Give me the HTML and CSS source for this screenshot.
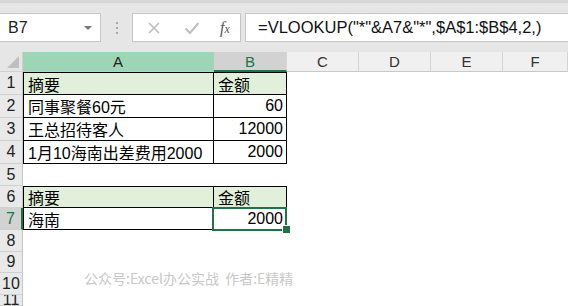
FILE: index.html
```html
<!DOCTYPE html>
<html lang="zh">
<head>
    <meta charset="UTF-8">
    <title>VLOOKUP 模糊查找</title>
    <link rel="stylesheet" href="styles.css">
</head>
<body>
    <div class="topline"></div>
    <div class="fbar">
        <div class="namebox">
            <span>B7</span>
            <span class="caret"></span>
        </div>
        <div class="dots"><i></i><i></i><i></i></div>
        <div class="btns">
            <svg class="ico" width="14" height="14" viewBox="0 0 14 14"><path d="M2 2L12 12M12 2L2 12" stroke="#bdbdbd" stroke-width="1.6" fill="none"/></svg>
            <svg class="ico" width="16" height="14" viewBox="0 0 16 14"><path d="M1.5 7.5L6 12L14.5 2" stroke="#bdbdbd" stroke-width="2" fill="none"/></svg>
            <span class="fx">f<small>x</small></span>
        </div>
        <div class="formula">=VLOOKUP("*"&amp;A7&amp;"*",$A$1:$B$4,2,)</div>
    </div>

    <div class="sheet">
        <!-- header -->
        <div class="corner"><span class="tri"></span></div>
        <div class="ch ch-a">A</div>
        <div class="ch ch-b">B</div>
        <div class="ch">C</div>
        <div class="ch">D</div>
        <div class="ch">E</div>
        <div class="ch">F</div>

        <!-- row 1 -->
        <div class="rh">1</div>
        <div class="c t a top hd">摘要</div>
        <div class="c t top hd">金额</div>
        <div class="c"></div><div class="c"></div><div class="c"></div><div class="c"></div>

        <!-- row 2 -->
        <div class="rh">2</div>
        <div class="c t a">同事聚餐60元</div>
        <div class="c t num">60</div>
        <div class="c"></div><div class="c"></div><div class="c"></div><div class="c"></div>

        <!-- row 3 -->
        <div class="rh">3</div>
        <div class="c t a">王总招待客人</div>
        <div class="c t num">12000</div>
        <div class="c"></div><div class="c"></div><div class="c"></div><div class="c"></div>

        <!-- row 4 -->
        <div class="rh">4</div>
        <div class="c t a">1月10海南出差费用2000</div>
        <div class="c t num">2000</div>
        <div class="c"></div><div class="c"></div><div class="c"></div><div class="c"></div>

        <!-- row 5 -->
        <div class="rh">5</div>
        <div class="c"></div><div class="c"></div>
        <div class="c"></div><div class="c"></div><div class="c"></div><div class="c"></div>

        <!-- row 6 -->
        <div class="rh">6</div>
        <div class="c t a top hd">摘要</div>
        <div class="c t top hd">金额</div>
        <div class="c"></div><div class="c"></div><div class="c"></div><div class="c"></div>

        <!-- row 7 -->
        <div class="rh rh-sel">7</div>
        <div class="c t a">海南</div>
        <div class="c t num sel">2000</div>
        <div class="c"></div><div class="c"></div><div class="c"></div><div class="c"></div>

        <!-- rows 8-11 -->
        <div class="rh">8</div>
        <div class="c"></div><div class="c"></div><div class="c"></div><div class="c"></div><div class="c"></div><div class="c"></div>
        <div class="rh">9</div>
        <div class="c"></div><div class="c"></div><div class="c"></div><div class="c"></div><div class="c"></div><div class="c"></div>
        <div class="rh">10</div>
        <div class="c"></div><div class="c"></div><div class="c"></div><div class="c"></div><div class="c"></div><div class="c"></div>
        <div class="rh">11</div>
        <div class="c"></div><div class="c"></div><div class="c"></div><div class="c"></div><div class="c"></div><div class="c"></div>

        <div class="mark">公众号:Excel办公实战&nbsp; 作者:E精精</div>
    </div>
</body>
</html>
```

FILE: styles.css
```css
* {
    margin: 0;
    padding: 0;
    box-sizing: border-box;
}
body {
    width: 568px;
    height: 306px;
    overflow: hidden;
    background: #fff;
    font-family: 'Liberation Sans', 'Noto Sans CJK SC', sans-serif;
    color: #000;
}
.topline {
    height: 3px;
    background: #d6d6d6;
}
.fbar {
    height: 49px;
    background: #e6e6e6;
    display: flex;
    align-items: flex-start;
    padding-top: 10px;
    white-space: nowrap;
}
.namebox {
    width: 101px;
    height: 29px;
    background: #fff;
    border: 1px solid #c6c6c6;
    border-left: none;
    display: flex;
    align-items: center;
    justify-content: space-between;
    padding: 0 8px 0 8px;
    font-size: 16px;
    color: #222;
}
.caret {
    width: 0;
    height: 0;
    border-left: 4px solid transparent;
    border-right: 4px solid transparent;
    border-top: 4px solid #777;
    margin-top: 1px;
}
.dots {
    width: 31px;
    height: 29px;
    display: flex;
    flex-direction: column;
    align-items: center;
    justify-content: center;
    gap: 3px;
}
.dots i {
    display: block;
    width: 2px;
    height: 2px;
    background: #aaa;
}
.btns {
    width: 109px;
    height: 29px;
    background: #fff;
    border: 1px solid #c6c6c6;
    display: flex;
    align-items: center;
    padding-left: 14px;
}
.btns .ico:nth-child(2) {
    margin-left: 23px;
}
.fx {
    margin-left: 20px;
    font-family: 'Liberation Serif', serif;
    font-style: italic;
    font-size: 16px;
    color: #555;
}
.fx small {
    font-size: 12px;
}
.formula {
    flex: 1;
    height: 29px;
    margin-left: 4px;
    background: #fff;
    border: 1px solid #c6c6c6;
    border-right: none;
    font-size: 16.5px;
    line-height: 27px;
    padding-left: 12px;
    color: #111;
}

.sheet {
    position: relative;
    display: grid;
    grid-template-columns: 23px 191px 73px 72px 72px 72px 1fr;
    grid-template-rows: 20px 23px 23px 23px 23px 22px 22px 22px 22px 21px 22px 11px;
    height: 254px;
}
.corner {
    background: #e6e6e6;
    border-right: 1px solid #d0d0d0;
    border-bottom: 1px solid #d0d0d0;
    position: relative;
}
.tri {
    position: absolute;
    right: 3px;
    bottom: 3px;
    width: 0;
    height: 0;
    border-left: 12px solid transparent;
    border-bottom: 12px solid #bfbfbf;
}
.ch {
    background: #f0f0f0;
    border-right: 1px solid #d4d4d4;
    border-bottom: 1px solid #c8c8c8;
    display: flex;
    align-items: center;
    justify-content: center;
    font-size: 15px;
    color: #333;
}
.ch-a {
    background: #9fd5b7;
    border-right-color: #9fd5b7;
    color: #222;
}
.ch-b {
    background: #d2d2d2;
    border-bottom: 2px solid #217346;
    color: #217346;
}
.rh {
    background: #e9e9e9;
    border-right: 1px solid #c6c6c6;
    border-bottom: 1px solid #d0d0d0;
    display: flex;
    align-items: center;
    justify-content: center;
    font-size: 16px;
    color: #222;
    overflow: hidden;
}
.rh-sel {
    background: #d2d2d2;
    border-right: 2px solid #217346;
    color: #217346;
}
.c {
    display: flex;
    align-items: center;
    padding-left: 4px;
    font-size: 16px;
    white-space: nowrap;
}
.t {
    border-right: 1px solid #000;
    border-bottom: 1px solid #000;
}
.t.a {
    border-left: 1px solid #000;
}
.t.top {
    border-top: 1px solid #000;
}
.hd {
    background: #e2efda;
}
.num {
    justify-content: flex-end;
    padding-right: 3px;
}
.sel {
    position: relative;
}
.sel::after {
    content: '';
    position: absolute;
    top: -1px;
    left: -2px;
    right: -1px;
    bottom: -2px;
    border: 2px solid #217346;
}
.sel::before {
    content: '';
    position: absolute;
    right: -5px;
    bottom: -5px;
    width: 7px;
    height: 7px;
    background: #217346;
    border: 1px solid #fff;
    z-index: 1;
}
.mark {
    position: absolute;
    left: 84px;
    top: 216px;
    font-family: 'Noto Sans CJK SC', sans-serif;
    font-size: 14px;
    color: #c8c8c8;
    white-space: nowrap;
}
```
